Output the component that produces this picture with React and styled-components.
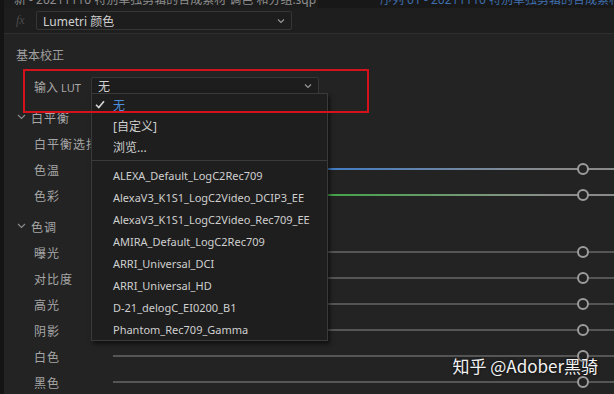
import React from "react";
import styled, { createGlobalStyle } from "styled-components";

const Global = createGlobalStyle`
  html, body { margin: 0; padding: 0; background: #222; }
  body { font-family: "Noto Sans", "Noto Sans CJK SC", sans-serif; }
`;

const Screen = styled.div`
  position: relative;
  width: 614px;
  height: 394px;
  overflow: hidden;
  background: #232323;
  border-left: 4px solid #141414;
  box-sizing: border-box;
  color: #b0b0b0;
  font-family: "Noto Sans", "Noto Sans CJK SC", sans-serif;
`;

const TopStrip = styled.div`
  height: 8px;
  overflow: hidden;
  display: flex;
  background: #1c1c1c;
`;

const TopText = styled.div`
  margin-top: -8px;
  line-height: 16px;
  height: 16px;
  font-size: 12px;
  white-space: nowrap;
  color: ${(p) => p.$color};
  padding-left: ${(p) => p.$pad}px;
  width: ${(p) => p.$w}px;
  min-width: 0;
  background: ${(p) => p.$bg};
  flex: ${(p) => (p.$grow ? "1 1 0" : "none")};
  overflow: hidden;
  box-sizing: border-box;
`;

const EffectRow = styled.div`
  height: 25px;
  display: flex;
  align-items: center;
  background: #1e1e1e;
  border-bottom: 1px solid #2e2e2e;
  padding-left: 12px;
`;

const Fx = styled.span`
  width: 20px;
  font-family: "Liberation Serif", serif;
  font-style: italic;
  font-size: 12px;
  color: #4a4a4a;
`;

const Select = styled.div`
  box-sizing: border-box;
  width: ${(p) => p.$w}px;
  height: 19px;
  border: 1px solid #363636;
  border-radius: 2px;
  background: #1d1d1d;
  display: flex;
  align-items: center;
  justify-content: space-between;
  padding: 0 6px;
  font-size: 12px;
  color: #d0d0d0;
  font-family: "Noto Sans", "Noto Sans CJK SC", sans-serif;
`;

const Chevron = () => (
  <svg width="8" height="6" viewBox="0 0 8 6">
    <path d="M1 1.5 L4 4.5 L7 1.5" fill="none" stroke="#9a9a9a" strokeWidth="1.1" />
  </svg>
);

const Panel = styled.div`
  padding-top: 11px;
`;

const SectionTitle = styled.div`
  height: 20px;
  line-height: 20px;
  padding-left: 12px;
  font-size: 12px;
  color: #a0a0a0;
  font-family: "Noto Sans CJK SC", sans-serif;
`;

const LutRow = styled.div`
  position: relative;
  margin-top: 10px;
  height: 22px;
  display: flex;
  align-items: center;
  padding-left: 30px;
  font-size: 12px;
`;

const LutLabel = styled.span`
  width: 57px;
  color: #a8a8a8;
  font-family: "Noto Sans CJK SC", sans-serif;
  small {
    font-family: "Noto Sans", sans-serif;
    font-size: 11px;
    margin-left: 3px;
  }
`;

const Highlight = styled.div`
  position: absolute;
  left: 19px;
  top: -6px;
  width: 346px;
  height: 44px;
  box-sizing: border-box;
  border: 2px solid #d3121b;
  z-index: 3;
  pointer-events: none;
`;

const Menu = styled.div`
  position: absolute;
  left: 87px;
  top: 18px;
  width: 237px;
  box-sizing: border-box;
  background: #1e1e1e;
  border: 1px solid #3a3a3a;
  box-shadow: 2px 3px 4px rgba(0, 0, 0, 0.55);
  z-index: 2;
  font-family: "Noto Sans", "Noto Sans CJK SC", sans-serif;
`;

const MenuItem = styled.div`
  height: ${(p) => (p.$short ? 21 : 22)}px;
  display: flex;
  align-items: center;
  padding-left: 21px;
  position: relative;
  font-size: ${(p) => (p.$cjk ? 12 : 11)}px;
  color: ${(p) => (p.$active ? "#4d8fdc" : "#cfcfcf")};
`;

const Check = styled.svg`
  position: absolute;
  left: 3px;
  top: 6px;
`;

const MenuSep = styled.div`
  height: 1px;
  background: #3a3a3a;
  margin: 3px 0 3px;
`;

const Rows = styled.div`
  margin-top: 7px;
`;

const Row = styled.div`
  height: 26px;
  display: flex;
  align-items: center;
  margin-top: ${(p) => (p.$gap ? 5 : 0)}px;
`;

const Label = styled.div`
  width: 109px;
  padding-left: ${(p) => (p.$group ? 13 : 30)}px;
  box-sizing: border-box;
  flex: none;
  display: flex;
  align-items: center;
  gap: 5px;
  font-size: 12px;
  letter-spacing: 1px;
  color: #a6a6a6;
  white-space: nowrap;
  font-family: "Noto Sans CJK SC", sans-serif;
`;

const Track = styled.div`
  position: relative;
  flex: 1;
  height: 2px;
  background: ${(p) =>
    p.$tint === "blue"
      ? "linear-gradient(90deg, #2f6fce 0%, #3d7ac8 40%, #7f8b97 78%, #8a8a8a 88%)"
      : p.$tint === "green"
      ? "linear-gradient(90deg, #2fa33a 0%, #3fa445 40%, #7f957f 78%, #8a8a8a 88%)"
      : "#555"};
`;

const Thumb = styled.div`
  position: absolute;
  left: 464px;
  top: -5px;
  width: 12px;
  height: 12px;
  box-sizing: border-box;
  border-radius: 50%;
  border: 2px solid #9c9c9c;
  background: #232323;
`;

const Watermark = styled.div`
  position: absolute;
  right: 16px;
  bottom: 16px;
  font-size: 17px;
  color: #f2f2f2;
  font-family: "Noto Sans CJK SC", sans-serif;
  text-shadow: 0 0 3px rgba(0, 0, 0, 0.8);
  z-index: 4;
`;

const Caret = () => (
  <svg width="9" height="6" viewBox="0 0 9 6">
    <path d="M1 1 L4.5 4.5 L8 1" fill="none" stroke="#8a8a8a" strokeWidth="1.2" />
  </svg>
);

const luts = [
  "ALEXA_Default_LogC2Rec709",
  "AlexaV3_K1S1_LogC2Video_DCIP3_EE",
  "AlexaV3_K1S1_LogC2Video_Rec709_EE",
  "AMIRA_Default_LogC2Rec709",
  "ARRI_Universal_DCI",
  "ARRI_Universal_HD",
  "D-21_delogC_EI0200_B1",
  "Phantom_Rec709_Gamma",
];

const rows = [
  { label: "白平衡", group: true },
  { label: "白平衡选择" },
  { label: "色温", slider: "blue" },
  { label: "色彩", slider: "green" },
  { label: "色调", group: true, gap: true },
  { label: "曝光", slider: "grey" },
  { label: "对比度", slider: "grey" },
  { label: "高光", slider: "grey" },
  { label: "阴影", slider: "grey" },
  { label: "白色", slider: "grey" },
  { label: "黑色", slider: "grey" },
];

export default function App() {
  return (
    <>
      <Global />
      <Screen>
        <TopStrip>
          <TopText $color="#8e8e8e" $pad={10} $w={314}>
            新 - 20211110 特别单独剪辑的合成素材 调色 和分组.sqp
          </TopText>
          <TopText $color="#3f6fae" $pad={62} $bg="#181818" $grow>
            序列 01 - 20211110 特别单独剪辑的合成素材 调色 和分组
          </TopText>
        </TopStrip>
        <EffectRow>
          <Fx>fx</Fx>
          <Select $w={256}>
            <span>Lumetri 颜色</span>
            <Chevron />
          </Select>
        </EffectRow>
        <Panel>
          <SectionTitle>基本校正</SectionTitle>
          <LutRow>
            <LutLabel>
              输入<small>LUT</small>
            </LutLabel>
            <Select $w={228}>
              <span>无</span>
              <Chevron />
            </Select>
            <Highlight />
            <Menu>
              <MenuItem $short $cjk $active>
                <Check width="10" height="9" viewBox="0 0 10 9">
                  <path d="M1 4.8 L3.8 7.6 L9 1.2" fill="none" stroke="#d8d8d8" strokeWidth="1.6" />
                </Check>
                无
              </MenuItem>
              <MenuItem $short $cjk>[自定义]</MenuItem>
              <MenuItem $short $cjk>浏览...</MenuItem>
              <MenuSep />
              {luts.map((l) => (
                <MenuItem key={l}>{l}</MenuItem>
              ))}
            </Menu>
          </LutRow>
          <Rows>
            {rows.map((r) => (
              <Row key={r.label} $gap={r.gap}>
                <Label $group={r.group}>
                  {r.group && <Caret />}
                  {r.label}
                </Label>
                {r.slider && (
                  <Track $tint={r.slider}>
                    <Thumb />
                  </Track>
                )}
              </Row>
            ))}
          </Rows>
        </Panel>
        <Watermark>知乎 @Adober黑骑</Watermark>
      </Screen>
    </>
  );
}
